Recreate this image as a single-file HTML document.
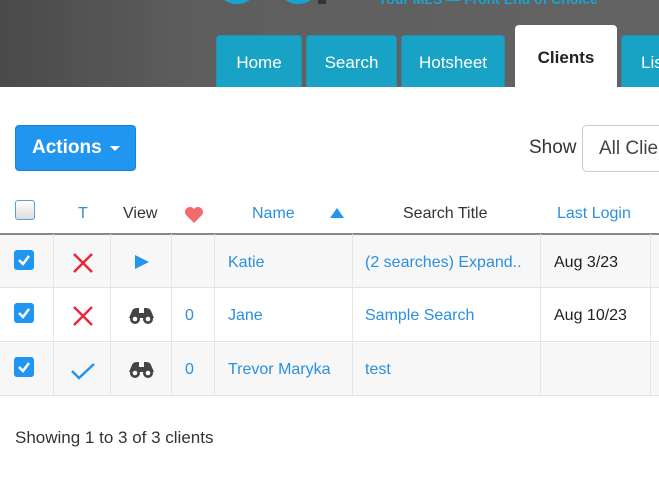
<!DOCTYPE html>
<html><head><style>
*{box-sizing:border-box;margin:0;padding:0}
body{width:659px;height:481px;overflow:hidden;background:#fff;font-family:"Liberation Sans",sans-serif;position:relative}
.hdr{position:absolute;left:0;top:0;width:659px;height:87px;background:linear-gradient(90deg,#4a4a4a 0%,#5e5e5e 30%,#636363 100%)}
.tab{position:absolute;top:35px;height:52px;background:#18a2c6;border:1px solid #2a8fae;border-bottom:none;border-radius:4px 4px 0 0;color:#fff;font-size:17px;text-align:center;line-height:54px}
.tab.act{top:25px;height:62px;background:#fff;border:none;color:#222;font-weight:bold;line-height:66px}
.abs{position:absolute;white-space:nowrap}
.btn{left:15px;top:125px;width:121px;height:46px;background:#2196f0;border:1px solid #1a82d0;border-radius:4px;color:#fff;font-size:19px;font-weight:bold;line-height:44px;padding-left:16px}
.caret{position:absolute;left:94px;top:20px;border-left:5px solid transparent;border-right:5px solid transparent;border-top:5px solid #fff}
.row{position:absolute;left:0;width:659px;height:54px;border-bottom:1px solid #e2e2e2}
.vl{position:absolute;width:1px;background:#e6e6e6;top:234px;height:162px}
.t{position:absolute;font-size:16px;color:#2a8fe0;white-space:nowrap}
.cb{position:absolute;left:14px;width:20px;height:20px;border-radius:3px;background:#2196f0}
.cb svg{position:absolute;left:3px;top:3px}
</style></head><body>
<div class="hdr"></div>
<div class="abs" style="left:222px;top:-14px;width:30px;height:18px;border:4px solid #1aa3cf;border-radius:50%"></div>
<div class="abs" style="left:283px;top:-14px;width:30px;height:18px;border:4px solid #1aa3cf;border-radius:50%"></div>
<div class="abs" style="left:318px;top:-4px;width:8px;height:8px;background:#333"></div>
<div class="abs" style="left:378px;top:-9px;font-size:14px;font-weight:bold;color:#1aa3cf">Your MLS — Front End of Choice</div>
<div class="tab" style="left:216px;width:86px">Home</div>
<div class="tab" style="left:306px;width:91px">Search</div>
<div class="tab" style="left:401px;width:104px">Hotsheet</div>
<div class="tab act" style="left:515px;width:102px">Clients</div>
<div class="tab" style="left:621px;width:60px;text-align:left;padding-left:19px">Lis</div>

<div class="abs btn">Actions<span class="caret"></span></div>
<div class="abs" style="left:529px;top:137px;font-size:19px;color:#333">Show</div>
<div class="abs" style="left:582px;top:125px;width:100px;height:47px;border:1px solid #ccc;border-radius:5px;font-size:19px;color:#444;line-height:46px;padding-left:16px">All Clients</div>

<div class="abs" style="left:15px;top:200px;width:20px;height:20px;border:1px solid #5a9fd6;border-radius:3px;background:linear-gradient(#fff,#ddd)"></div>
<div class="t" style="left:78px;top:205px">T</div>
<div class="abs" style="left:123px;top:205px;font-size:16px;color:#333">View</div>
<svg class="abs" style="left:184px;top:206px" width="20" height="18" viewBox="0 0 20 18"><path d="M10 17 L2 9 A4.5 4.5 0 0 1 10 3 A4.5 4.5 0 0 1 18 9 Z" fill="#f26b6b"/></svg>
<div class="t" style="left:252px;top:205px">Name</div>
<div class="abs" style="left:330px;top:208px;border-left:7px solid transparent;border-right:7px solid transparent;border-bottom:10px solid #2196f0"></div>
<div class="abs" style="left:403px;top:205px;font-size:16px;color:#333">Search Title</div>
<div class="t" style="left:557px;top:205px">Last Login</div>
<div class="abs" style="left:0;top:233px;width:659px;height:2px;background:#888"></div>

<div class="row" style="top:235px;background:#f7f7f7;height:53px"></div>
<div class="row" style="top:289px;height:53px"></div>
<div class="row" style="top:343px;background:#f7f7f7;height:53px"></div>
<div class="vl" style="left:53px"></div><div class="vl" style="left:110px"></div><div class="vl" style="left:171px"></div><div class="vl" style="left:214px"></div><div class="vl" style="left:352px"></div><div class="vl" style="left:540px"></div><div class="vl" style="left:650px"></div>

<div class="cb" style="top:250px"><svg width="14" height="14"><path d="M2 7 L6 11 L12 3" stroke="#fff" stroke-width="2.5" fill="none"/></svg></div>
<div class="cb" style="top:303px"><svg width="14" height="14"><path d="M2 7 L6 11 L12 3" stroke="#fff" stroke-width="2.5" fill="none"/></svg></div>
<div class="cb" style="top:357px"><svg width="14" height="14"><path d="M2 7 L6 11 L12 3" stroke="#fff" stroke-width="2.5" fill="none"/></svg></div>

<svg class="abs" style="left:72px;top:252px" width="22" height="22"><path d="M2 2 L20 20 M20 2 L2 20" stroke="#e8283c" stroke-width="2.5"/></svg>
<svg class="abs" style="left:72px;top:305px" width="22" height="22"><path d="M2 2 L20 20 M20 2 L2 20" stroke="#e8283c" stroke-width="2.5"/></svg>
<svg class="abs" style="left:70px;top:361px" width="26" height="20"><path d="M2 10 L9 17 L24 3" stroke="#2196f0" stroke-width="2.5" fill="none"/></svg>

<svg class="abs" style="left:134px;top:254px" width="16" height="16"><path d="M1 1 L15 8 L1 15 Z" fill="#2196f0"/></svg>
<svg class="abs" style="left:128px;top:307px" width="27" height="18" viewBox="0 0 27 18"><path d="M4 4 Q5 1 9 1 L11 1 L11 6 L16 6 L16 1 L18 1 Q22 1 23 4 L26 11 L1 11 Z" fill="#444"/><circle cx="7" cy="12" r="5" fill="#444"/><circle cx="20" cy="12" r="5" fill="#444"/><circle cx="7" cy="12" r="2.3" fill="#fff"/><circle cx="20" cy="12" r="2.3" fill="#fff"/></svg>
<svg class="abs" style="left:128px;top:361px" width="27" height="18" viewBox="0 0 27 18"><path d="M4 4 Q5 1 9 1 L11 1 L11 6 L16 6 L16 1 L18 1 Q22 1 23 4 L26 11 L1 11 Z" fill="#444"/><circle cx="7" cy="12" r="5" fill="#444"/><circle cx="20" cy="12" r="5" fill="#444"/><circle cx="7" cy="12" r="2.3" fill="#fff"/><circle cx="20" cy="12" r="2.3" fill="#fff"/></svg>

<div class="t" style="left:185px;top:307px">0</div>
<div class="t" style="left:185px;top:361px">0</div>
<div class="t" style="left:228px;top:254px">Katie</div>
<div class="t" style="left:228px;top:307px">Jane</div>
<div class="t" style="left:228px;top:361px">Trevor Maryka</div>
<div class="t" style="left:365px;top:254px">(2 searches) Expand..</div>
<div class="t" style="left:365px;top:307px">Sample Search</div>
<div class="t" style="left:365px;top:361px">test</div>
<div class="abs" style="left:554px;top:254px;font-size:16px;color:#222">Aug 3/23</div>
<div class="abs" style="left:554px;top:307px;font-size:16px;color:#222">Aug 10/23</div>

<div class="abs" style="left:15px;top:428px;font-size:17px;color:#333">Showing 1 to 3 of 3 clients</div>
</body></html>
